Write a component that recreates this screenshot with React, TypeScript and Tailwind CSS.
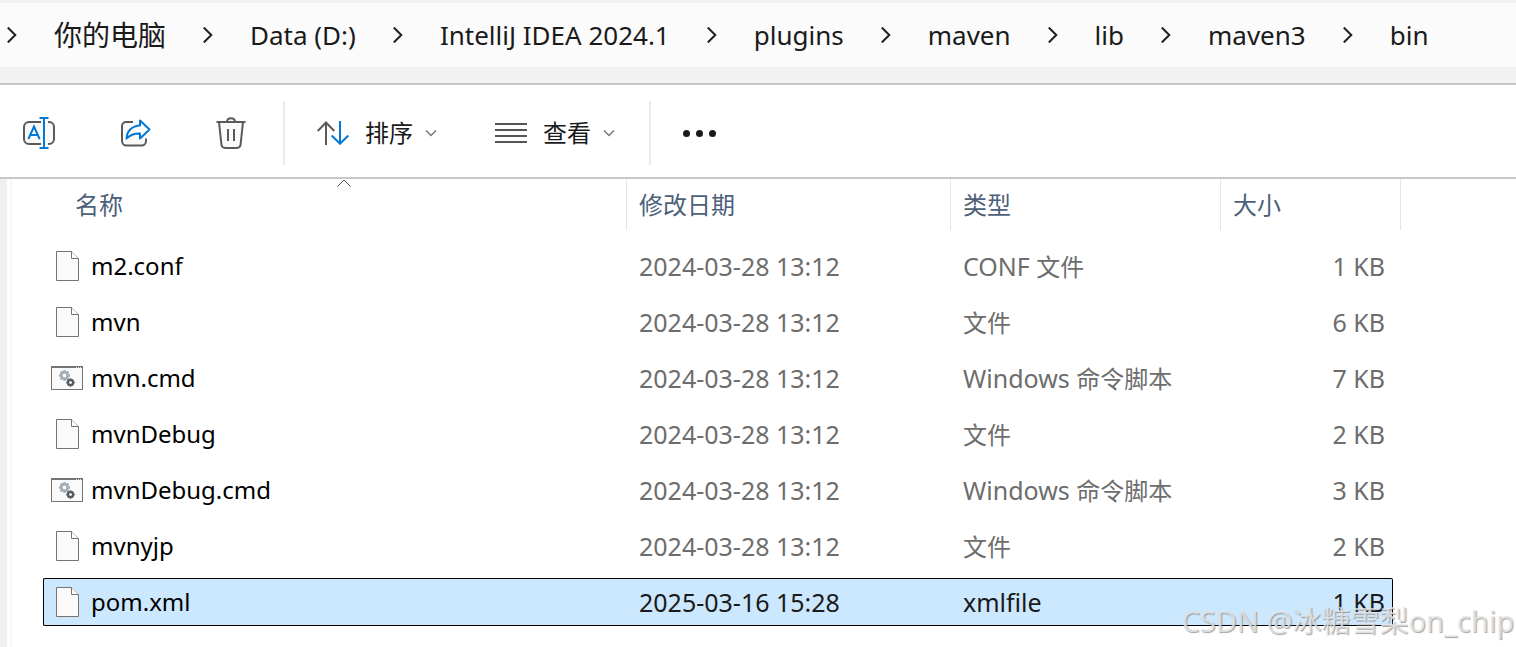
import React from 'react';

type Kind = 'file' | 'script';

interface Entry {
  name: string;
  kind: Kind;
  modified: string;
  type: string;
  size: string;
  selected?: boolean;
}

const crumbs: string[] = ['你的电脑', 'Data (D:)', 'IntelliJ IDEA 2024.1', 'plugins', 'maven', 'lib', 'maven3', 'bin'];

const entries: Entry[] = [
  { name: 'm2.conf', kind: 'file', modified: '2024-03-28 13:12', type: 'CONF 文件', size: '1 KB' },
  { name: 'mvn', kind: 'file', modified: '2024-03-28 13:12', type: '文件', size: '6 KB' },
  { name: 'mvn.cmd', kind: 'script', modified: '2024-03-28 13:12', type: 'Windows 命令脚本', size: '7 KB' },
  { name: 'mvnDebug', kind: 'file', modified: '2024-03-28 13:12', type: '文件', size: '2 KB' },
  { name: 'mvnDebug.cmd', kind: 'script', modified: '2024-03-28 13:12', type: 'Windows 命令脚本', size: '3 KB' },
  { name: 'mvnyjp', kind: 'file', modified: '2024-03-28 13:12', type: '文件', size: '2 KB' },
  { name: 'pom.xml', kind: 'file', modified: '2025-03-16 15:28', type: 'xmlfile', size: '1 KB', selected: true },
];

function CrumbArrow() {
  return (
    <svg aria-hidden="true" className="h-4 w-2.5 shrink-0" viewBox="0 0 10 16" fill="none" stroke="#1f1f1f" strokeWidth="2">
      <path d="M0.800 0.500 L8.300 8 L0.800 15.500" />
    </svg>
  );
}

function RenameIcon() {
  return (
    <svg aria-hidden="true" className="size-8" viewBox="0 0 32 32" fill="none" strokeWidth="2">
      <rect x="1" y="5" width="30" height="22" rx="5" fill="#fafafa" />
      <path d="M18 5 H6 A5 5 0 0 0 1 10 V22 A5 5 0 0 0 6 27 H18" stroke="#5a5a5a" />
      <path d="M25 5 H26 A5 5 0 0 1 31 10 V22 A5 5 0 0 1 26 27 H25" stroke="#5a5a5a" />
      <path d="M5.400 22 L11 9.500 L16.600 22 M7.200 18 H14.800" stroke="#0078d4" />
      <path d="M21 1 V31 M16.500 1 H25.500 M16.500 31 H25.500" stroke="#0078d4" />
    </svg>
  );
}

function ShareIcon() {
  return (
    <svg aria-hidden="true" className="size-8" viewBox="0 0 32 32" fill="none" strokeWidth="2">
      <path d="M3 5 H27 V28 H3 Z" fill="#fafafa" />
      <path d="M14 5 H7 A4 4 0 0 0 3 9 V24 A4.500 4.500 0 0 0 7.500 28.500 H22.500 A4.500 4.500 0 0 0 27 24 V21.500" stroke="#5a5a5a" />
      <path d="M21 3.500 L30.500 12.500 L21 21.500 V16.500 C15 16.300 11 18 7.500 21.500 C8 14 13 8.800 21 8.500 Z" fill="#fff" stroke="#0078d4" strokeLinejoin="round" />
    </svg>
  );
}

function TrashIcon() {
  return (
    <svg aria-hidden="true" className="size-8" viewBox="0 0 32 32" fill="none" stroke="#5a5a5a" strokeWidth="2">
      <path d="M4 5 L6.400 27.500 A4 4 0 0 0 10.300 31 H21.700 A4 4 0 0 0 25.600 27.500 L28 5" fill="#fafafa" />
      <path d="M1.500 5 H30.500 M12 5 C12 0 20 0 20 5 M13 12 V24 M19 12 V24" />
    </svg>
  );
}

function SortIcon() {
  return (
    <svg aria-hidden="true" className="h-6 w-8" viewBox="0 0 32 24" fill="none" strokeWidth="2">
      <path d="M9 24 V1 M0.700 10 L9 1.500 L17.300 10" stroke="#5a5a5a" />
      <path d="M23 0 V23 M14.700 14.500 L23 22.700 L31.300 14.500" stroke="#0078d4" />
    </svg>
  );
}

function ViewIcon() {
  return (
    <svg aria-hidden="true" className="h-6 w-8" viewBox="0 0 32 24" stroke="#555" strokeWidth="2">
      <path d="M0 3 H32 M0 9 H32 M0 15 H32 M0 21 H32" />
    </svg>
  );
}

function Caret() {
  return (
    <svg aria-hidden="true" className="h-2 w-3" viewBox="0 0 12 8" fill="none" stroke="#777" strokeWidth="1.500">
      <path d="M1 1.500 L6 6.500 L11 1.500" />
    </svg>
  );
}

function FileIcon() {
  return (
    <svg aria-hidden="true" className="h-[30px] w-8" viewBox="0 0 32 30">
      <path d="M5.500 0.500 H20.500 L27.500 7.500 V29.500 H5.500 Z" fill="#fafafa" stroke="#767371" />
      <path d="M20.500 0.500 V7.500 H27.500" fill="#fff" stroke="#767371" />
    </svg>
  );
}

function Gear({ x, y, r, color }: { x: number; y: number; r: number; color: string }) {
  const teeth = [0, 45, 90, 135];
  return (
    <g transform={`translate(${x} ${y})`} stroke={color} fill="none">
      <circle r={r * 0.58} strokeWidth={r * 0.46} />
      {teeth.map((a) => (
        <path
          key={a}
          d={`M0 ${-r} V${-r * 0.6} M0 ${r * 0.6} V${r}`}
          strokeWidth={r * 0.42}
          transform={`rotate(${a})`}
        />
      ))}
    </g>
  );
}

function ScriptIcon() {
  return (
    <svg aria-hidden="true" className="h-6 w-8" viewBox="0 0 32 24">
      <rect x="0.500" y="0.500" width="31" height="23" fill="#fafafa" stroke="#767371" />
      <path d="M0 1 H32" stroke="#767371" strokeWidth="2" />
      <path d="M25 1.500 H26 M27 1.500 H28 M29 1.500 H30" stroke="#ddd" />
      <Gear x={13.5} y={9.5} r={5.5} color="#a3adb7" />
      <Gear x={19.5} y={16.5} r={4.2} color="#50585f" />
    </svg>
  );
}

function Divider() {
  return <div className="h-16 w-0.5 shrink-0 bg-[#ececec]" />;
}

function AddressBar() {
  return (
    <header className="border-b-2 border-[#c9c5c5] bg-[#f3f2f2] pt-[3px] pb-4">
      <nav aria-label="路径" className="flex h-16 items-center gap-[37px] overflow-hidden bg-[#fbfbfb] pl-[7px] text-[26px] whitespace-nowrap text-[#1a1a1a]">
        {crumbs.map((c) => (
          <React.Fragment key={c}>
            <CrumbArrow />
            <a href="#" className={c === '你的电脑' ? 'text-[28px]' : ''}>
              {c}
            </a>
          </React.Fragment>
        ))}
      </nav>
    </header>
  );
}

function Toolbar() {
  const iconButton = 'flex h-16 w-18 items-center justify-center';
  const menuButton = 'flex h-16 items-center px-4 text-2xl text-[#1a1a1a]';
  return (
    <div role="toolbar" className="flex h-[94px] items-center border-b-2 border-[#cac6c6] bg-white pt-1 pl-[3px]">
      <div className="mr-4 flex gap-6">
        <button aria-label="重命名" className={iconButton}><RenameIcon /></button>
        <button aria-label="共享" className={iconButton}><ShareIcon /></button>
        <button aria-label="删除" className={iconButton}><TrashIcon /></button>
      </div>
      <Divider />
      <div className="mr-[18px] ml-4 flex gap-[26px]">
        <button className={menuButton}>
          <SortIcon />
          <span className="mr-3 ml-4">排序</span>
          <Caret />
        </button>
        <button className={menuButton}>
          <ViewIcon />
          <span className="mr-3 ml-4">查看</span>
          <Caret />
        </button>
      </div>
      <Divider />
      <button aria-label="更多" className="ml-4 flex h-16 items-center gap-1.5 px-4">
        <span className="size-[7px] rounded-full bg-[#1a1a1a]" />
        <span className="size-[7px] rounded-full bg-[#1a1a1a]" />
        <span className="size-[7px] rounded-full bg-[#1a1a1a]" />
      </button>
    </div>
  );
}

function HeadCell({ label, first, last }: { label: string; first?: boolean; last?: boolean }) {
  return (
    <th scope="col" className="relative h-[55px] p-0 align-top font-normal">
      <div className={`flex h-[51px] items-center text-left text-2xl text-[#4c607a] ${first ? 'pl-8' : 'border-l border-[#e5e5e5] pl-3'}`}>
        {label}
      </div>
      {first && (
        <svg aria-hidden="true" className="absolute top-0 left-[294px] h-2 w-3.5" viewBox="0 0 14 8" fill="none" stroke="#555">
          <path d="M0.500 7.500 L7 1 L13.500 7.500" />
        </svg>
      )}
      {last && <span className="absolute top-0 -right-2 h-[51px] w-px bg-[#e5e5e5]" />}
    </th>
  );
}

function TypeLabel({ text }: { text: string }) {
  const parts = text.split(/([\u4e00-\u9fff]+)/).filter(Boolean);
  return (
    <>
      {parts.map((p) => (
        <span key={p} className={/[\u4e00-\u9fff]/.test(p) ? 'text-2xl leading-8' : ''}>
          {p}
        </span>
      ))}
    </>
  );
}

function FileRow({ entry }: { entry: Entry }) {
  const sel = entry.selected;
  const cell = sel ? 'h-12 border-y border-black bg-[#cce8ff] py-0 text-[#1a1a1a]' : 'h-12 py-0 text-[#6d6d6d]';
  return (
    <tr aria-selected={sel}>
      <td className={`${cell} pr-0 ${sel ? 'rounded-l-xs border-l pl-[7px]' : 'pl-2'}`}>
        <div className="flex items-center gap-2 text-2xl text-black">
          {entry.kind === 'file' ? <FileIcon /> : <ScriptIcon />}
          <span>{entry.name}</span>
        </div>
      </td>
      <td className={`${cell} px-[13px]`}>{entry.modified}</td>
      <td className={`${cell} px-[13px]`}><TypeLabel text={entry.type} /></td>
      <td className={`${cell} pl-3 text-right ${sel ? 'rounded-r-xs border-r pr-[7px]' : 'pr-2'}`}>{entry.size}</td>
    </tr>
  );
}

export default function App() {
  return (
    <div className="relative flex min-h-screen flex-col overflow-hidden bg-white font-['Noto_Sans','Noto_Sans_CJK_SC',sans-serif]">
      <AddressBar />
      <Toolbar />
      <main className="flex grow">
        <div className="w-[7px] shrink-0 bg-[#efefef]" />
        <div className="ml-[3px] w-0.5 shrink-0 bg-[#f7f7f7]" />
        <div className="grow pr-[123px] pl-[31px]">
          <table className="-mt-2 w-full table-fixed border-separate border-spacing-x-0 border-spacing-y-2 text-[25px] leading-8 whitespace-nowrap">
            <colgroup>
              <col />
              <col className="w-[324px]" />
              <col className="w-[270px]" />
              <col className="w-[173px]" />
            </colgroup>
            <thead>
              <tr>
                <HeadCell label="名称" first />
                <HeadCell label="修改日期" />
                <HeadCell label="类型" />
                <HeadCell label="大小" last />
              </tr>
            </thead>
            <tbody>
              {entries.map((e) => (
                <FileRow key={e.name} entry={e} />
              ))}
            </tbody>
          </table>
        </div>
      </main>
      <div className="pointer-events-none absolute right-0.5 bottom-2 text-[29px] leading-9 text-[#e8e8e8]/80 [text-shadow:1px_1px_1px_#777a]">
        CSDN @冰糖雪梨on_chip
      </div>
    </div>
  );
}
